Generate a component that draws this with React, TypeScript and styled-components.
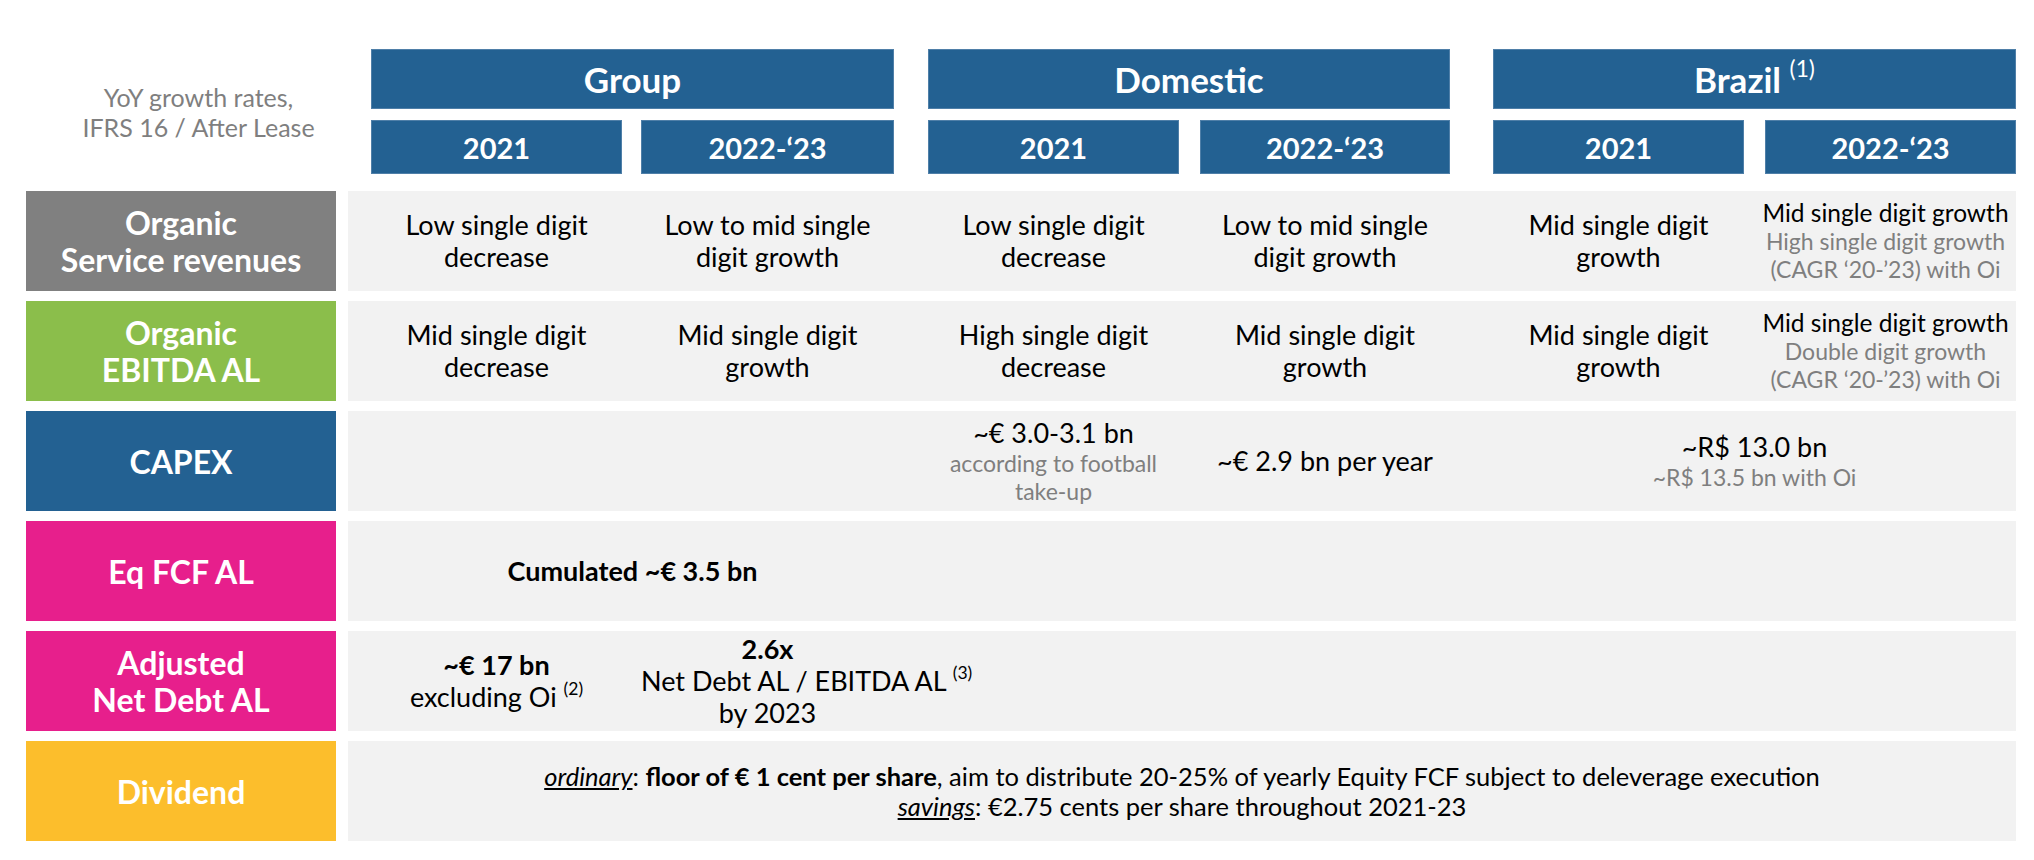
import { FunctionComponent, ReactNode } from "react";
import styled, { createGlobalStyle } from "styled-components";

const BLUE = "#236192";
const GREY_TEXT = "#7f7f7f";
const TRACKS =
  "251px 19px 253px 34px 251px 21px 250px 43px 251px 21px 251px";

const SPANS: Record<string, string> = {
  g1: "1 / 2",
  g2: "3 / 4",
  g: "1 / 4",
  d1: "5 / 6",
  d2: "7 / 8",
  d: "5 / 8",
  b1: "9 / 10",
  b2: "11 / 12",
  b: "9 / 12",
  all: "1 / 12",
};

const GlobalStyle = createGlobalStyle`
  html, body {
    margin: 0;
    padding: 0;
    background: #ffffff;
  }
  body {
    font-family: Lato, "Open Sans", "Liberation Sans", sans-serif;
    color: #000;
  }
`;

const Page = styled.div`
  width: 2034px;
  padding: 49px 0 0 26px;
  box-sizing: border-box;
`;

const HeaderRow = styled.div`
  display: flex;
  align-items: center;
`;

const Caption = styled.div`
  width: 345px;
  text-align: center;
  color: ${GREY_TEXT};
  font-size: 25px;
  line-height: 30px;
`;

const HeaderGrid = styled.div`
  display: grid;
  grid-template-columns: ${TRACKS};
  grid-template-rows: 60px 54px;
  row-gap: 11px;
`;

const HeadBox = styled.div<{ $col: string }>`
  grid-column: ${(p) => SPANS[p.$col]};
  background: ${BLUE};
  box-shadow: inset 0 0 0 1px #4f7fa8;
  color: #fff;
  font-weight: 700;
  display: flex;
  align-items: center;
  justify-content: center;
`;

const GroupHead = styled(HeadBox)`
  grid-row: 1;
  font-size: 35px;
`;

const YearHead = styled(HeadBox)`
  grid-row: 2;
  font-size: 29px;
`;

const Rows = styled.div`
  display: flex;
  flex-direction: column;
  gap: 10px;
  margin-top: 17px;
`;

const DataRow = styled.div`
  display: flex;
  gap: 12px;
  height: 100px;
`;

const RowLabel = styled.div<{ $color: string }>`
  width: 310px;
  flex: none;
  background: ${(p) => p.$color};
  color: #fff;
  font-weight: 700;
  font-size: 32px;
  line-height: 37px;
  text-align: center;
  display: flex;
  align-items: center;
  justify-content: center;
`;

const Band = styled.div`
  width: 1668px;
  background: #f2f2f2;
  padding-left: 23px;
  box-sizing: border-box;
  display: grid;
  grid-template-columns: ${TRACKS};
  align-items: center;
`;

const Cell = styled.div<{ $col: string; $bleed?: boolean }>`
  grid-column: ${(p) => SPANS[p.$col]};
  grid-row: 1;
  margin-left: ${(p) => (p.$bleed ? "-23px" : "0")};
  text-align: center;
  font-size: 27px;
  line-height: 32px;
  white-space: nowrap;
`;

const Stack = styled.div`
  display: flex;
  flex-direction: column;
  align-items: center;
  margin-left: -10px;
`;

const Line = styled.span`
  font-size: 24.5px;
  line-height: 28px;
`;

const Note = styled.div`
  color: ${GREY_TEXT};
  font-size: 23px;
  line-height: 28px;
`;

const Sup = styled.sup`
  font-size: 65%;
  line-height: 0;
  vertical-align: 0.7em;
  font-weight: 400;
`;

const Dividend = styled.div`
  font-size: 25.5px;
  line-height: 30px;
`;

const Under = styled.span`
  font-style: italic;
  text-decoration: underline;
`;

interface CellDef {
  col: string;
  content: ReactNode;
  bleed?: boolean;
}

interface RowDef {
  label: ReactNode;
  color: string;
  cells: CellDef[];
}

const rows: RowDef[] = [
  {
    label: (
      <>
        Organic
        <br />
        Service revenues
      </>
    ),
    color: "#808080",
    cells: [
      { col: "g1", content: <>Low single digit<br />decrease</> },
      { col: "g2", content: <>Low to mid single<br />digit growth</> },
      { col: "d1", content: <>Low single digit<br />decrease</> },
      { col: "d2", content: <>Low to mid single<br />digit growth</> },
      { col: "b1", content: <>Mid single digit<br />growth</> },
      {
        col: "b2",
        content: (
          <Stack>
            <Line>Mid single digit growth</Line>
            <Note>High single digit growth</Note>
            <Note>(CAGR ‘20-’23) with Oi</Note>
          </Stack>
        ),
      },
    ],
  },
  {
    label: (
      <>
        Organic
        <br />
        EBITDA AL
      </>
    ),
    color: "#8bbe4b",
    cells: [
      { col: "g1", content: <>Mid single digit<br />decrease</> },
      { col: "g2", content: <>Mid single digit<br />growth</> },
      { col: "d1", content: <>High single digit<br />decrease</> },
      { col: "d2", content: <>Mid single digit<br />growth</> },
      { col: "b1", content: <>Mid single digit<br />growth</> },
      {
        col: "b2",
        content: (
          <Stack>
            <Line>Mid single digit growth</Line>
            <Note>Double digit growth</Note>
            <Note>(CAGR ‘20-’23) with Oi</Note>
          </Stack>
        ),
      },
    ],
  },
  {
    label: "CAPEX",
    color: BLUE,
    cells: [
      {
        col: "d1",
        content: (
          <>
            ~€ 3.0-3.1 bn
            <Note>
              according to football
              <br />
              take-up
            </Note>
          </>
        ),
      },
      { col: "d2", content: "~€ 2.9 bn per year" },
      {
        col: "b",
        content: (
          <>
            ~R$ 13.0 bn
            <Note>~R$ 13.5 bn with Oi</Note>
          </>
        ),
      },
    ],
  },
  {
    label: "Eq FCF AL",
    color: "#e71f8c",
    cells: [{ col: "g", content: <b>Cumulated ~€ 3.5 bn</b> }],
  },
  {
    label: (
      <>
        Adjusted
        <br />
        Net Debt AL
      </>
    ),
    color: "#e71f8c",
    cells: [
      {
        col: "g1",
        content: (
          <>
            <b>~€ 17 bn</b>
            <br />
            excluding Oi <Sup>(2)</Sup>
          </>
        ),
      },
      {
        col: "g2",
        content: (
          <>
            <b>2.6x</b>
            <br />
            Net Debt AL / EBITDA AL <Sup>(3)</Sup>
            <br />
            by 2023
          </>
        ),
      },
    ],
  },
  {
    label: "Dividend",
    color: "#fcbe2c",
    cells: [
      {
        col: "all",
        bleed: true,
        content: (
          <Dividend>
            <Under>ordinary</Under>: <b>floor of € 1 cent per share</b>, aim
            to distribute 20-25% of yearly Equity FCF subject to deleverage
            execution
            <br />
            <Under>savings</Under>: €2.75 cents per share throughout 2021-23
          </Dividend>
        ),
      },
    ],
  },
];

const headers = [
  { col: "g", title: <span>Group</span>, subs: ["g1", "g2"] },
  { col: "d", title: <span>Domestic</span>, subs: ["d1", "d2"] },
  {
    col: "b",
    title: (
      <span>
        Brazil <Sup>(1)</Sup>
      </span>
    ),
    subs: ["b1", "b2"],
  },
];

const App: FunctionComponent = () => {
  return (
    <Page>
      <GlobalStyle />
      <HeaderRow>
        <Caption>
          YoY growth rates,
          <br />
          IFRS 16 / After Lease
        </Caption>
        <HeaderGrid>
          {headers.map((h) => (
            <GroupHead key={h.col} $col={h.col}>
              {h.title}
            </GroupHead>
          ))}
          {headers.map((h) =>
            h.subs.map((s, i) => (
              <YearHead key={s} $col={s}>
                {i === 0 ? "2021" : "2022-‘23"}
              </YearHead>
            ))
          )}
        </HeaderGrid>
      </HeaderRow>
      <Rows>
        {rows.map((row, i) => (
          <DataRow key={i}>
            <RowLabel $color={row.color}>{row.label}</RowLabel>
            <Band>
              {row.cells.map((c) => (
                <Cell key={c.col} $col={c.col} $bleed={c.bleed}>
                  {c.content}
                </Cell>
              ))}
            </Band>
          </DataRow>
        ))}
      </Rows>
    </Page>
  );
};

export default App;
